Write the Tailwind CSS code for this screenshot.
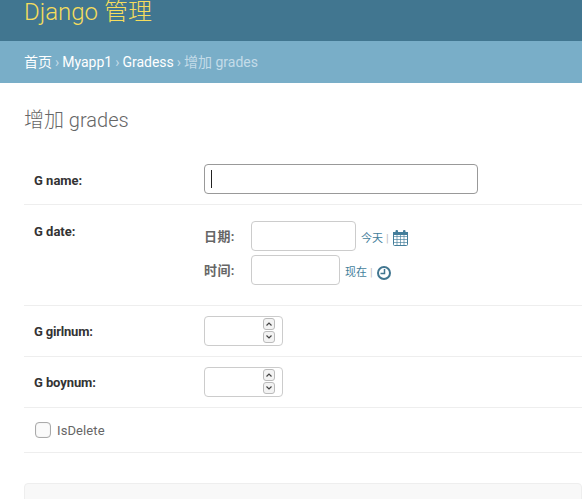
<!DOCTYPE html>
<html lang="zh">
<head>
<meta charset="utf-8">
<script src="https://cdn.jsdelivr.net/npm/@tailwindcss/browser@4"></script>
</head>
<body class="bg-white overflow-hidden h-[499px] font-['Roboto','Noto_Sans_CJK_SC',sans-serif] text-[#333]">
<header class="h-[41px] bg-[#417690] pl-[24px] overflow-hidden">
  <h1 class="text-[24px] leading-[24px] font-light text-[#f5dd5d]">Django 管理</h1>
</header>
<nav class="h-[42px] bg-[#79aec8] pl-[24px] flex items-center text-[14px] text-[#c4dce8]">
  <a class="text-white">首页</a><span class="mx-[3px]">›</span><a class="text-white">Myapp1</a><span class="mx-[3px]">›</span><a class="text-white">Gradess</a><span class="mx-[3px]">›</span><span>增加 grades</span>
</nav>
<main class="pl-[24px]">
  <h2 class="text-[20px] leading-[24px] font-light text-[#666] mt-[25px] mb-[17px]">增加 grades</h2>
  <div class="flex border-b border-[#eee] h-[56px] pl-[10px] pt-[15px]">
    <label class="w-[170px] text-[13px] font-bold leading-[34px]">G name:</label>
    <div class="w-[274px] h-[30px] border border-[#999] rounded-[4px] flex items-center pl-[6px]">
      <span class="w-px h-[18px] bg-[#222]"></span>
    </div>
  </div>
  <div class="flex border-b border-[#eee] h-[101px] pl-[10px] pt-[10px]">
    <label class="w-[170px] text-[13px] font-bold leading-[34px]">G date:</label>
    <div class="flex flex-col gap-[4px] pt-[6px]">
      <div class="flex items-center h-[30px]">
        <span class="w-[47px] mt-[2px] text-[13px] font-bold text-[#666] tracking-[0.4px]">日期:</span>
        <span class="w-[105px] h-[30px] border border-[#ccc] rounded-[4px]"></span>
        <a class="ml-[5px] mt-[6px] text-[11px] text-[#447e9b]">今天</a>
        <span class="mx-[3px] mt-[6px] text-[11px] text-[#bbb]">|</span>
        <svg class="w-[15px] h-[16px] ml-[1px] mt-[4px]" viewBox="0 0 15 16" fill="none" stroke="#447e9b"><rect x="0.5" y="2.5" width="14" height="13" rx="1" fill="#fff"/><path d="M0.5 6.5h14M0.5 9.5h14M0.5 12.5h14M4 5v10M7.5 5v10M11 5v10" stroke-width="1" opacity=".65"/><rect x="0" y="2" width="15" height="3" fill="#447e9b" stroke="none"/><rect x="2.5" y="0" width="2.5" height="4" rx="1" fill="#447e9b" stroke="none"/><rect x="10" y="0" width="2.5" height="4" rx="1" fill="#447e9b" stroke="none"/></svg>
      </div>
      <div class="flex items-center h-[30px]">
        <span class="w-[47px] mt-[2px] text-[13px] font-bold text-[#666] tracking-[0.4px]">时间:</span>
        <span class="w-[89px] h-[30px] border border-[#ccc] rounded-[4px]"></span>
        <a class="ml-[5px] mt-[6px] text-[11px] text-[#447e9b]">现在</a>
        <span class="mx-[3px] mt-[6px] text-[11px] text-[#bbb]">|</span>
        <svg class="w-[14px] h-[14px] ml-[1px] mt-[6px]" viewBox="0 0 14 14" fill="none" stroke="#417690"><circle cx="7" cy="7" r="6" stroke-width="2"/><path d="M7.5 3V7.5H3.5" stroke-width="1.5"/></svg>
      </div>
    </div>
  </div>
  <div class="flex border-b border-[#eee] h-[51px] pl-[10px] pt-[10px]">
    <label class="w-[170px] text-[13px] font-bold leading-[32px] tracking-[-0.2px]">G girlnum:</label>
    <div class="w-[79px] h-[30px] border border-[#ccc] rounded-[4px] flex flex-col items-end pr-[7px] pt-[1px] gap-[1px]">
      <span class="w-[12px] h-[12px] border border-[#bbb] rounded-[3px] bg-[#f3f3f3] flex items-center justify-center"><svg class="w-[8px] h-[8px]" viewBox="0 0 8 8" fill="none" stroke="#444" stroke-width="1.2"><path d="M1.5 5.5L4 3l2.5 2.5"/></svg></span>
      <span class="w-[12px] h-[12px] border border-[#bbb] rounded-[3px] bg-[#f3f3f3] flex items-center justify-center"><svg class="w-[8px] h-[8px]" viewBox="0 0 8 8" fill="none" stroke="#444" stroke-width="1.2"><path d="M1.5 2.5L4 5l2.5-2.5"/></svg></span>
    </div>
  </div>
  <div class="flex border-b border-[#eee] h-[51px] pl-[10px] pt-[10px]">
    <label class="w-[170px] text-[13px] font-bold leading-[32px] tracking-[-0.1px]">G boynum:</label>
    <div class="w-[79px] h-[30px] border border-[#ccc] rounded-[4px] flex flex-col items-end pr-[7px] pt-[1px] gap-[1px]">
      <span class="w-[12px] h-[12px] border border-[#bbb] rounded-[3px] bg-[#f3f3f3] flex items-center justify-center"><svg class="w-[8px] h-[8px]" viewBox="0 0 8 8" fill="none" stroke="#444" stroke-width="1.2"><path d="M1.5 5.5L4 3l2.5 2.5"/></svg></span>
      <span class="w-[12px] h-[12px] border border-[#bbb] rounded-[3px] bg-[#f3f3f3] flex items-center justify-center"><svg class="w-[8px] h-[8px]" viewBox="0 0 8 8" fill="none" stroke="#444" stroke-width="1.2"><path d="M1.5 2.5L4 5l2.5-2.5"/></svg></span>
    </div>
  </div>
  <div class="flex items-center border-b border-[#eee] h-[45px] pl-[11px]">
    <span class="w-[16px] h-[16px] border border-[#aaa] rounded-[4px] bg-[#fafafa] shadow-[inset_0_0_1px_#ccc]"></span>
    <label class="ml-[6px] mt-[2px] text-[13px] text-[#666] tracking-[0.1px]">IsDelete</label>
  </div>
  <div class="mt-[30px] h-[40px] bg-[#f8f8f8] border border-[#eee] rounded-[4px]"></div>
</main>
</body>
</html>
